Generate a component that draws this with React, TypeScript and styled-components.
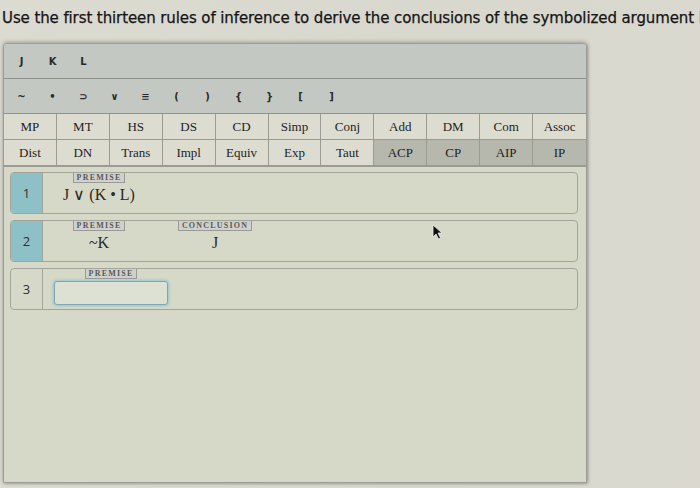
import React from "react";
import styled, { createGlobalStyle } from "styled-components";

const GlobalStyle = createGlobalStyle`
  html, body {
    margin: 0;
    padding: 0;
    background: #d9d8cf;
  }
`;

const Page = styled.div`
  position: relative;
  width: 700px;
  height: 488px;
  overflow: hidden;
  background: linear-gradient(90deg, #dcdbd2 0%, #d8d8ce 60%, #dad8cf 100%);
`;

const Title = styled.h1`
  margin: 0;
  padding: 9px 0 0 2px;
  height: 32px;
  box-sizing: border-box;
  font-family: "DejaVu Sans", Verdana, sans-serif;
  font-size: 15px;
  font-weight: normal;
  color: #151515;
  -webkit-text-stroke: 0.25px #151515;
  white-space: nowrap;
  letter-spacing: -0.1px;
`;

const Panel = styled.div`
  margin: 11px 0 0 3px;
  width: 584px;
  height: 440px;
  box-sizing: border-box;
  border: 1px solid #9c9d97;
  border-radius: 4px 4px 0 0;
  background: #d6d9c7;
  box-shadow: 0 -1px 4px rgba(0, 0, 0, 0.25), 1px 1px 3px rgba(0, 0, 0, 0.2);
  overflow: hidden;
`;

const SymbolBar = styled.div`
  display: flex;
  align-items: center;
  height: 34px;
  padding-left: 2px;
  background: #c4c8c2;
  border-bottom: 1px solid #8f928c;
`;

const Symbol = styled.span`
  width: 31px;
  text-align: center;
  font-family: "DejaVu Sans", sans-serif;
  font-size: 10px;
  font-weight: bold;
  color: #2a2a2a;
`;

const RuleGrid = styled.div`
  display: grid;
  grid-template-columns: repeat(11, 1fr);
  grid-auto-rows: 26px;
  border-bottom: 1px solid #9a9b92;
`;

const Rule = styled.div<{ $dark?: boolean }>`
  display: flex;
  align-items: center;
  justify-content: center;
  background: ${(p) => (p.$dark ? "#b6b8ae" : "#dcdcd1")};
  border-right: 1px solid #9a9b92;
  border-bottom: 1px solid #9a9b92;
  font-family: "Liberation Serif", "Times New Roman", serif;
  font-size: 13px;
  color: #1e1e1e;
  &:nth-child(11n) {
    border-right: none;
  }
`;

const Lines = styled.div`
  display: flex;
  flex-direction: column;
  gap: 6px;
  padding: 5px 8px 0 6px;
`;

const Line = styled.div`
  display: flex;
  height: 42px;
  box-sizing: border-box;
  border: 1px solid #a3a59b;
  border-radius: 4px;
  overflow: hidden;
`;

const LineNumber = styled.div<{ $given?: boolean }>`
  display: flex;
  align-items: center;
  justify-content: center;
  width: 31px;
  flex-shrink: 0;
  background: ${(p) => (p.$given ? "#8ec1c7" : "transparent")};
  border-right: 1px solid #a3a59b;
  font-family: "Open Sans", sans-serif;
  font-size: 13px;
  color: #2f2f2f;
`;

const LineBody = styled.div`
  display: flex;
  align-items: flex-start;
  gap: 26px;
  padding-left: 11px;
`;

const Field = styled.div`
  display: flex;
  flex-direction: column;
  align-items: center;
  min-width: 90px;
`;

const Tag = styled.span`
  display: block;
  height: 9px;
  padding: 0 3px;
  line-height: 9px;
  border: 1px solid #9a9a94;
  border-top: none;
  background: #d0d1cc;
  font-family: "Liberation Serif", serif;
  font-size: 8px;
  font-weight: bold;
  letter-spacing: 1.2px;
  color: #5a5a5a;
`;

const Formula = styled.span`
  margin-top: 2px;
  font-family: "Liberation Serif", "Times New Roman", serif;
  font-size: 16px;
  line-height: 19px;
  color: #2a2a2a;
  white-space: pre;
`;

const Entry = styled.div`
  margin-top: 2px;
  width: 114px;
  height: 24px;
  box-sizing: border-box;
  border: 1.5px solid #7ea6b6;
  border-radius: 3px;
  background: #dde1d3;
  box-shadow: 0 0 3px 1px rgba(120, 190, 220, 0.7);
`;

const Pointer = styled.svg`
  position: absolute;
  left: 432px;
  top: 224px;
`;

const symbols = ["~", "•", "⊃", "∨", "≡", "(", ")", "{", "}", "[", "]"];
const rulesTop = ["MP", "MT", "HS", "DS", "CD", "Simp", "Conj", "Add", "DM", "Com", "Assoc"];
const rulesBottom = ["Dist", "DN", "Trans", "Impl", "Equiv", "Exp", "Taut", "ACP", "CP", "AIP", "IP"];
const darkRules = ["ACP", "CP", "AIP", "IP"];

export default function App() {
  return (
    <Page>
      <GlobalStyle />
      <Title>
        Use the first thirteen rules of inference to derive the conclusions of the symbolized argument b
      </Title>
      <Panel>
        <SymbolBar>
          {["J", "K", "L"].map((v) => (
            <Symbol key={v}>{v}</Symbol>
          ))}
        </SymbolBar>
        <SymbolBar>
          {symbols.map((s) => (
            <Symbol key={s}>{s}</Symbol>
          ))}
        </SymbolBar>
        <RuleGrid>
          {rulesTop.map((r) => (
            <Rule key={r}>{r}</Rule>
          ))}
          {rulesBottom.map((r) => (
            <Rule key={r} $dark={darkRules.includes(r)}>
              {r}
            </Rule>
          ))}
        </RuleGrid>
        <Lines>
          <Line>
            <LineNumber $given>1</LineNumber>
            <LineBody>
              <Field>
                <Tag>PREMISE</Tag>
                <Formula>J ∨ (K • L)</Formula>
              </Field>
            </LineBody>
          </Line>
          <Line>
            <LineNumber $given>2</LineNumber>
            <LineBody>
              <Field>
                <Tag>PREMISE</Tag>
                <Formula>~K</Formula>
              </Field>
              <Field>
                <Tag>CONCLUSION</Tag>
                <Formula>J</Formula>
              </Field>
            </LineBody>
          </Line>
          <Line>
            <LineNumber>3</LineNumber>
            <LineBody>
              <Field>
                <Tag>PREMISE</Tag>
                <Entry />
              </Field>
            </LineBody>
          </Line>
        </Lines>
      </Panel>
      <Pointer width="11" height="16" viewBox="0 0 11 16">
        <path d="M1 1 L1 13 L4 10 L6.5 15 L8.5 14 L6 9 L10 9 Z" fill="#111" stroke="#eee" strokeWidth="0.8" />
      </Pointer>
    </Page>
  );
}
